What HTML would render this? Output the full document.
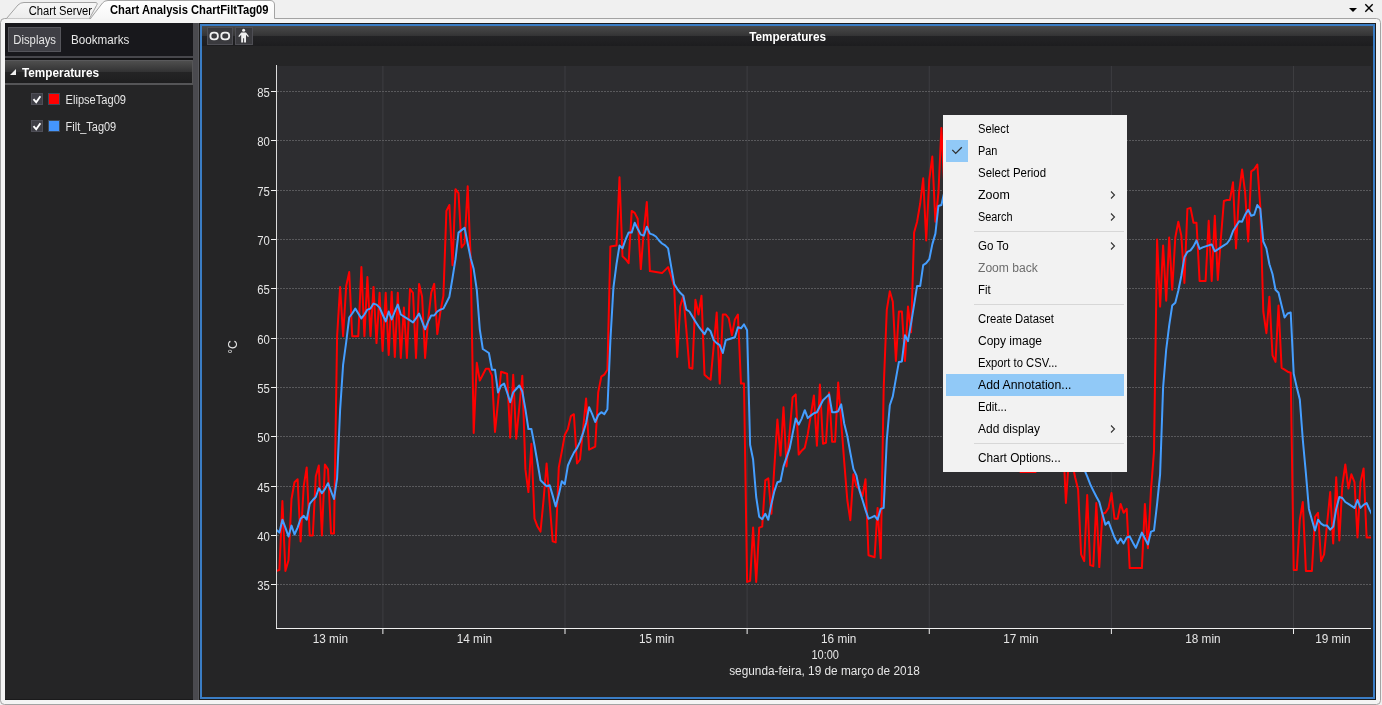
<!DOCTYPE html>
<html lang="pt"><head><meta charset="utf-8"><title>Chart Analysis ChartFiltTag09</title>
<style>html,body{margin:0;padding:0;background:#f0f0f0;overflow:hidden}body{width:1382px;height:705px;position:relative;font-family:"Liberation Sans", sans-serif}svg{position:absolute;left:0;top:0;display:block;will-change:transform}text{font-family:"Liberation Sans", sans-serif;font-size:12px}.b{font-weight:bold}.w{fill:#e6e6e6}.m{fill:#000}</style></head><body>
<svg width="1382" height="705" viewBox="0 0 1382 705">
<defs>
<linearGradient id="gh" x1="0" y1="0" x2="0" y2="1"><stop offset="0" stop-color="#515151"/><stop offset="0.48" stop-color="#333334"/><stop offset="0.5" stop-color="#242425"/><stop offset="1" stop-color="#1d1d1e"/></linearGradient>
<linearGradient id="gt" x1="0" y1="0" x2="0" y2="1"><stop offset="0" stop-color="#4a4a4a"/><stop offset="0.48" stop-color="#343435"/><stop offset="0.5" stop-color="#232325"/><stop offset="1" stop-color="#1d1d1f"/></linearGradient>
<linearGradient id="gtab" x1="0" y1="0" x2="0" y2="1"><stop offset="0" stop-color="#f7f7f7"/><stop offset="1" stop-color="#ececec"/></linearGradient>
<linearGradient id="gtab2" x1="0" y1="0" x2="0" y2="1"><stop offset="0" stop-color="#ffffff"/><stop offset="1" stop-color="#f6f6f6"/></linearGradient>
<clipPath id="cp"><rect x="277" y="66" width="1094" height="562"/></clipPath>
</defs>
<rect width="1382" height="705" fill="#f0f0f0"/>
<rect x="0.5" y="18.5" width="1380" height="686" rx="4" ry="4" fill="#f4f4f4" stroke="#a3a3a3"/>
<path d="M6.5,18.5 L18,5 Q20.5,2.5 24,2.5 L95,2.5 Q98.5,2.5 96.5,5.5 L89.5,18.5" fill="url(#gtab)" stroke="#a3a3a3"/>
<path d="M90.5,19.5 L102.5,3 Q104.5,0.5 108,0.5 L270,0.5 Q274.5,0.5 274.5,5 L274.5,19.5 Z" fill="url(#gtab2)" stroke="none"/>
<path d="M90.5,18.5 L102.5,3 Q104.5,0.5 108,0.5 L270,0.5 Q274.5,0.5 274.5,5 L274.5,18.5" fill="none" stroke="#a3a3a3"/>
<rect x="91.5" y="18" width="182.5" height="1.5" fill="#f6f6f6"/>
<text class="m" x="28.7" y="15" textLength="63.3" lengthAdjust="spacingAndGlyphs">Chart Server</text>
<text class="m b" x="110" y="13.5" textLength="158.5" lengthAdjust="spacingAndGlyphs">Chart Analysis ChartFiltTag09</text>
<path d="M1349,8 L1357,8 L1353,12 Z" fill="#000"/>
<path d="M1365.3,4.3 L1372.7,11.7 M1372.7,4.3 L1365.3,11.7" stroke="#000" stroke-width="1.4" fill="none"/>
<g shape-rendering="crispEdges">
<rect x="5" y="23" width="1371" height="677" fill="#252526"/>
<rect x="5" y="699" width="1371" height="1" fill="#1a1a1b"/>
<rect x="5" y="23" width="188" height="33" fill="#18181c"/>
<rect x="5" y="56" width="188" height="2" fill="#47474c"/>
<rect x="5" y="58" width="188" height="2" fill="#121214"/>
<rect x="8.5" y="27.5" width="52" height="24" fill="#3f3f45" stroke="#55555b"/>
<rect x="5" y="60" width="188" height="24" fill="url(#gh)"/>
<rect x="5" y="60" width="188" height="1" fill="#5a5a5c"/>
<rect x="5" y="83" width="188" height="1.5" fill="#555557"/>
<rect x="192" y="60" width="1" height="24" fill="#555557"/>
<rect x="193" y="23" width="6" height="677" fill="#4a4a4f"/>
<rect x="198" y="23" width="1" height="677" fill="#58585c"/>
<rect x="199" y="23" width="1177" height="677" fill="#1c1c1d"/>
<rect x="200" y="24" width="1175" height="674.5" fill="#3a7dc5"/>
<rect x="202" y="26" width="1171" height="670.7" fill="#252526"/>
<rect x="202" y="26" width="1171" height="20" fill="url(#gt)"/>
<rect x="207.5" y="27.5" width="25" height="17" fill="#3a3a3e" stroke="#4e4e54"/>
<rect x="235.5" y="27.5" width="17" height="17" fill="#3a3a3e" stroke="#4e4e54"/>
<rect x="277" y="66" width="1094" height="562" fill="#2d2d30"/>
</g>
<rect x="382.375" y="66" width="1" height="562" fill="#3d3d40"/>
<rect x="564.500" y="66" width="1" height="562" fill="#3d3d40"/>
<rect x="746.625" y="66" width="1" height="562" fill="#3d3d40"/>
<rect x="928.750" y="66" width="1" height="562" fill="#3d3d40"/>
<rect x="1110.875" y="66" width="1" height="562" fill="#3d3d40"/>
<rect x="1293.000" y="66" width="1" height="562" fill="#3d3d40"/>
<line x1="277" y1="584.5" x2="1371" y2="584.5" stroke="#59595c" stroke-width="1" stroke-dasharray="2 1" shape-rendering="crispEdges"/>
<line x1="277" y1="535.5" x2="1371" y2="535.5" stroke="#59595c" stroke-width="1" stroke-dasharray="2 1" shape-rendering="crispEdges"/>
<line x1="277" y1="486.5" x2="1371" y2="486.5" stroke="#59595c" stroke-width="1" stroke-dasharray="2 1" shape-rendering="crispEdges"/>
<line x1="277" y1="436.5" x2="1371" y2="436.5" stroke="#59595c" stroke-width="1" stroke-dasharray="2 1" shape-rendering="crispEdges"/>
<line x1="277" y1="387.5" x2="1371" y2="387.5" stroke="#59595c" stroke-width="1" stroke-dasharray="2 1" shape-rendering="crispEdges"/>
<line x1="277" y1="338.5" x2="1371" y2="338.5" stroke="#59595c" stroke-width="1" stroke-dasharray="2 1" shape-rendering="crispEdges"/>
<line x1="277" y1="288.5" x2="1371" y2="288.5" stroke="#59595c" stroke-width="1" stroke-dasharray="2 1" shape-rendering="crispEdges"/>
<line x1="277" y1="239.5" x2="1371" y2="239.5" stroke="#59595c" stroke-width="1" stroke-dasharray="2 1" shape-rendering="crispEdges"/>
<line x1="277" y1="190.5" x2="1371" y2="190.5" stroke="#59595c" stroke-width="1" stroke-dasharray="2 1" shape-rendering="crispEdges"/>
<line x1="277" y1="140.5" x2="1371" y2="140.5" stroke="#59595c" stroke-width="1" stroke-dasharray="2 1" shape-rendering="crispEdges"/>
<line x1="277" y1="91.5" x2="1371" y2="91.5" stroke="#59595c" stroke-width="1" stroke-dasharray="2 1" shape-rendering="crispEdges"/>
<g clip-path="url(#cp)" fill="none" stroke-linejoin="round" stroke-width="2"><polyline stroke="#ff0000" points="276.3,571.0 279.4,570.0 282.4,501.0 285.4,571.0 288.5,560.2 291.5,499.0 294.5,482.2 297.6,479.3 300.6,541.4 303.7,486.2 306.7,467.4 309.7,535.5 312.8,535.5 315.8,476.3 318.8,465.5 321.9,535.5 324.9,464.5 328.0,469.4 331.0,533.5 334.0,533.5 337.1,336.2 340.1,286.9 343.1,336.2 346.2,285.9 349.2,272.1 352.2,336.2 355.3,336.2 358.3,336.2 361.4,267.1 364.4,336.2 367.4,277.0 370.5,336.2 373.5,286.9 376.5,343.1 379.6,292.8 382.6,351.0 385.7,292.8 388.7,354.9 391.7,291.8 394.8,356.9 397.8,292.8 400.8,357.9 403.9,307.6 406.9,357.9 410.0,288.8 413.0,292.8 416.0,357.9 419.1,283.9 422.1,296.7 425.1,357.9 428.2,319.4 431.2,292.8 434.2,283.9 437.3,334.2 440.3,312.5 443.4,295.7 446.4,210.9 449.4,205.0 452.5,265.2 455.5,189.2 458.5,193.1 461.6,247.4 464.6,243.5 467.7,186.2 470.7,259.2 473.7,432.9 476.8,362.8 479.8,380.6 482.8,374.7 485.9,368.8 488.9,368.8 492.0,375.7 495.0,431.9 498.0,402.3 501.1,371.7 504.1,372.7 507.1,373.7 510.2,437.8 513.2,374.7 516.2,438.8 519.3,407.2 522.3,375.7 525.4,469.4 528.4,492.1 531.4,443.8 534.5,518.7 537.5,526.6 540.5,531.6 543.6,499.5 546.6,463.5 549.7,503.9 552.7,541.4 555.7,542.4 558.8,467.4 561.8,451.6 564.8,434.9 567.9,429.0 570.9,416.1 573.9,414.2 577.0,463.5 580.0,459.5 583.1,429.0 586.1,398.4 589.1,449.7 592.2,448.2 595.2,446.7 598.2,392.4 601.3,376.7 604.3,374.7 607.4,369.7 610.4,246.4 613.4,245.9 616.5,245.4 619.5,177.3 622.5,256.3 625.6,259.2 628.6,263.2 631.7,210.9 634.7,212.9 637.7,218.8 640.8,269.1 643.8,230.6 646.8,202.0 649.9,271.1 652.9,271.6 655.9,272.1 659.0,272.6 662.0,273.1 665.1,270.1 668.1,267.1 671.1,276.0 674.2,286.9 677.2,356.9 680.2,306.6 683.3,295.7 686.3,329.3 689.4,367.8 692.4,368.8 695.4,299.7 698.5,314.5 701.5,295.7 704.5,374.7 707.6,377.6 710.6,379.6 713.7,346.1 716.7,312.5 719.7,383.6 722.8,314.5 725.8,314.5 728.8,318.4 731.9,335.2 734.9,319.4 737.9,314.5 741.0,383.6 744.0,383.6 747.1,581.9 750.1,580.9 753.1,527.6 756.2,581.9 759.2,527.6 762.2,526.6 765.3,480.3 768.3,478.3 771.4,513.8 774.4,466.4 777.4,419.6 780.5,455.6 783.5,407.2 786.5,466.4 789.6,432.9 792.6,397.4 795.7,394.4 798.7,454.6 801.7,450.7 804.8,447.7 807.8,433.9 810.8,415.1 813.9,395.4 816.9,445.7 819.9,384.5 823.0,443.8 826.0,442.8 829.1,392.4 832.1,441.8 835.1,441.8 838.2,382.6 841.2,422.0 844.2,461.5 847.3,500.0 850.3,520.2 853.4,474.3 856.4,486.2 859.4,489.1 862.5,496.0 865.5,479.3 868.5,555.2 871.6,556.2 874.6,557.2 877.6,507.9 880.7,558.2 883.7,387.5 886.8,309.6 889.8,291.3 892.8,301.7 895.9,360.9 898.9,311.5 901.9,311.5 905.0,360.9 908.0,306.6 911.1,332.3 914.1,232.6 917.1,221.7 920.2,203.5 923.2,178.3 926.2,240.5 929.3,179.3 932.3,156.6 935.4,221.7 938.4,193.1 941.4,128.0 944.5,190.2 947.5,150.7 950.5,200.0 953.6,160.6 956.6,209.9 959.6,170.4 962.7,219.8 965.7,190.2 968.8,239.5 971.8,200.0 974.8,249.4 977.9,219.8 980.9,279.0 983.9,239.5 987.0,298.7 990.0,269.1 993.1,318.4 996.1,288.8 999.1,338.2 1002.2,318.4 1005.2,377.6 1008.2,357.9 1011.3,417.1 1014.3,397.4 1017.4,446.7 1020.4,471.9 1023.4,471.9 1026.5,471.9 1029.5,471.9 1032.5,471.9 1035.6,471.9 1038.6,417.1 1041.6,466.4 1044.7,407.2 1047.7,456.6 1050.8,417.1 1053.8,461.5 1056.8,427.0 1059.9,456.6 1062.9,436.8 1065.9,503.0 1069.0,456.6 1072.0,461.5 1075.1,477.3 1078.1,489.6 1081.1,554.3 1084.2,561.2 1087.2,495.1 1090.2,565.1 1093.3,566.1 1096.3,503.0 1099.3,567.1 1102.4,513.8 1105.4,512.8 1108.5,507.9 1111.5,493.1 1114.5,518.7 1117.6,518.7 1120.6,503.9 1123.6,512.8 1126.7,508.9 1129.7,568.1 1132.8,568.1 1135.8,568.1 1138.8,568.1 1141.9,568.1 1144.9,503.9 1147.9,548.3 1151.0,489.6 1154.0,451.6 1157.1,239.5 1160.1,306.6 1163.1,245.4 1166.2,300.7 1169.2,237.5 1172.2,289.8 1175.3,237.5 1178.3,221.7 1181.3,235.6 1184.4,282.9 1187.4,208.9 1190.5,207.9 1193.5,222.7 1196.5,222.7 1199.6,280.9 1202.6,280.9 1205.6,280.9 1208.7,220.8 1211.7,280.9 1214.8,215.8 1217.8,280.0 1220.8,239.5 1223.9,201.0 1226.9,200.0 1229.9,200.0 1233.0,182.3 1236.0,248.4 1239.1,192.1 1242.1,169.4 1245.1,192.1 1248.2,241.5 1251.2,171.4 1254.2,169.4 1257.3,164.5 1260.3,206.9 1263.3,311.5 1266.4,333.2 1269.4,296.7 1272.5,355.4 1275.5,361.9 1278.5,305.6 1281.6,367.8 1284.6,369.7 1287.6,371.7 1290.7,372.7 1293.7,570.0 1296.8,570.0 1299.8,519.7 1302.8,502.0 1305.9,571.0 1308.9,571.0 1311.9,571.0 1315.0,516.8 1318.0,512.8 1321.1,561.2 1324.1,554.3 1327.1,523.7 1330.2,492.1 1333.2,543.4 1336.2,477.3 1339.3,540.4 1342.3,485.7 1345.3,464.5 1348.4,488.6 1351.4,474.3 1354.5,482.2 1357.5,537.5 1360.5,482.2 1363.6,468.4 1366.6,537.5 1369.6,537.5 1372.7,537.5"/><polyline stroke="#459eff" points="276.3,529.6 279.4,532.6 282.4,519.7 285.4,527.6 288.5,536.5 291.5,525.6 294.5,534.5 297.6,527.6 300.6,518.7 303.7,515.8 306.7,519.7 309.7,503.9 312.8,500.0 315.8,497.0 318.8,488.2 321.9,493.1 324.9,489.1 328.0,483.2 331.0,491.1 334.0,499.0 337.1,478.3 340.1,410.2 343.1,364.8 346.2,342.1 349.2,317.5 352.2,313.5 355.3,308.6 358.3,313.5 361.4,318.4 364.4,314.5 367.4,309.6 370.5,308.6 373.5,303.6 376.5,304.6 379.6,307.6 382.6,314.5 385.7,321.4 388.7,311.5 391.7,319.4 394.8,311.5 397.8,304.6 400.8,314.5 403.9,316.5 406.9,318.4 410.0,320.4 413.0,322.4 416.0,318.4 419.1,313.5 422.1,321.4 425.1,329.3 428.2,321.4 431.2,315.5 434.2,315.5 437.3,311.5 440.3,309.6 443.4,308.6 446.4,302.7 449.4,296.7 452.5,278.0 455.5,259.2 458.5,232.6 461.6,230.1 464.6,227.7 467.7,243.5 470.7,258.3 473.7,269.1 476.8,289.8 479.8,329.3 482.8,349.0 485.9,351.0 488.9,353.0 492.0,369.7 495.0,369.7 498.0,392.4 501.1,385.5 504.1,383.6 507.1,392.4 510.2,402.3 513.2,392.4 516.2,389.0 519.3,385.5 522.3,391.5 525.4,409.2 528.4,429.0 531.4,429.0 534.5,445.2 537.5,462.5 540.5,480.3 543.6,483.2 546.6,486.2 549.7,485.2 552.7,495.6 555.7,506.4 558.8,494.6 561.8,481.2 564.8,484.2 567.9,465.5 570.9,458.6 573.9,452.6 577.0,448.2 580.0,441.8 583.1,432.9 586.1,423.0 589.1,407.2 592.2,414.2 595.2,422.0 598.2,415.1 601.3,412.2 604.3,414.2 607.4,409.2 610.4,340.1 613.4,287.9 616.5,264.2 619.5,245.4 622.5,248.4 625.6,239.5 628.6,232.6 631.7,232.6 634.7,222.7 637.7,228.7 640.8,234.6 643.8,235.6 646.8,226.7 649.9,233.6 652.9,234.6 655.9,236.5 659.0,240.5 662.0,243.5 665.1,245.4 668.1,248.4 671.1,266.1 674.2,283.9 677.2,288.8 680.2,292.8 683.3,295.7 686.3,309.6 689.4,311.5 692.4,316.5 695.4,321.4 698.5,326.3 701.5,330.3 704.5,334.2 707.6,328.3 710.6,331.3 713.7,340.1 716.7,343.1 719.7,345.1 722.8,353.0 725.8,340.1 728.8,339.2 731.9,338.2 734.9,337.2 737.9,327.3 741.0,328.3 744.0,324.4 747.1,330.3 750.1,444.7 753.1,459.5 756.2,497.0 759.2,516.8 762.2,519.2 765.3,513.8 768.3,519.7 771.4,503.9 774.4,491.1 777.4,482.2 780.5,481.2 783.5,466.4 786.5,457.6 789.6,448.7 792.6,433.9 795.7,418.6 798.7,424.5 801.7,418.6 804.8,410.2 807.8,418.1 810.8,415.6 813.9,413.2 816.9,412.2 819.9,406.3 823.0,400.3 826.0,397.4 829.1,394.4 832.1,412.2 835.1,412.2 838.2,411.2 841.2,404.3 844.2,423.5 847.3,435.9 850.3,452.6 853.4,468.9 856.4,475.3 859.4,490.1 862.5,500.0 865.5,509.9 868.5,518.7 871.6,517.3 874.6,515.8 877.6,519.7 880.7,508.9 883.7,507.9 886.8,439.8 889.8,405.3 892.8,396.4 895.9,378.6 898.9,361.9 901.9,361.4 905.0,335.2 908.0,341.1 911.1,323.4 914.1,304.6 917.1,285.9 920.2,285.9 923.2,265.2 926.2,263.2 929.3,259.2 932.3,244.4 935.4,233.6 938.4,206.0 941.4,205.0 944.5,191.2 947.5,184.2 950.5,183.3 953.6,180.3 956.6,184.2 959.6,182.3 962.7,187.2 965.7,188.2 968.8,195.1 971.8,196.1 974.8,204.0 977.9,206.9 980.9,217.8 983.9,221.7 987.0,233.6 990.0,239.5 993.1,251.3 996.1,257.3 999.1,269.1 1002.2,277.0 1005.2,292.8 1008.2,302.7 1011.3,320.4 1014.3,332.3 1017.4,350.0 1020.4,368.8 1023.4,384.5 1026.5,397.4 1029.5,409.2 1032.5,418.1 1035.6,427.0 1038.6,425.0 1041.6,430.9 1044.7,428.0 1047.7,431.9 1050.8,429.9 1053.8,434.9 1056.8,433.9 1059.9,436.8 1062.9,436.8 1065.9,446.7 1069.0,448.7 1072.0,448.7 1075.1,449.7 1078.1,455.6 1081.1,464.5 1084.2,469.4 1087.2,476.3 1090.2,484.2 1093.3,490.6 1096.3,496.5 1099.3,502.0 1102.4,513.8 1105.4,524.7 1108.5,521.7 1111.5,529.6 1114.5,537.5 1117.6,543.4 1120.6,538.5 1123.6,543.4 1126.7,537.5 1129.7,536.5 1132.8,542.4 1135.8,547.8 1138.8,540.4 1141.9,532.6 1144.9,538.5 1147.9,544.4 1151.0,531.6 1154.0,530.6 1157.1,503.9 1160.1,474.3 1163.1,387.5 1166.2,349.5 1169.2,325.3 1172.2,305.6 1175.3,302.7 1178.3,290.8 1181.3,276.0 1184.4,257.3 1187.4,251.8 1190.5,250.4 1193.5,246.4 1196.5,240.5 1199.6,248.9 1202.6,247.4 1205.6,246.4 1208.7,245.4 1211.7,244.4 1214.8,251.3 1217.8,249.4 1220.8,247.4 1223.9,245.4 1226.9,243.5 1229.9,239.5 1233.0,231.1 1236.0,226.2 1239.1,221.3 1242.1,221.7 1245.1,214.8 1248.2,209.9 1251.2,215.8 1254.2,214.8 1257.3,205.0 1260.3,208.9 1263.3,241.5 1266.4,248.4 1269.4,264.2 1272.5,274.0 1275.5,289.8 1278.5,292.8 1281.6,305.6 1284.6,317.5 1287.6,313.5 1290.7,312.5 1293.7,373.7 1296.8,387.5 1299.8,399.4 1302.8,439.8 1305.9,473.4 1308.9,508.9 1311.9,519.7 1315.0,530.6 1318.0,519.7 1321.1,523.7 1324.1,525.6 1327.1,525.6 1330.2,529.6 1333.2,526.6 1336.2,508.9 1339.3,497.0 1342.3,498.0 1345.3,502.0 1348.4,503.9 1351.4,505.9 1354.5,507.9 1357.5,500.0 1360.5,507.9 1363.6,504.9 1366.6,503.0 1369.6,509.9 1372.7,515.8"/></g>
<g shape-rendering="crispEdges" fill="#f0f0f0">
<rect x="276" y="65" width="1" height="564" fill="#dcdcdc"/>
<rect x="276" y="628" width="1095" height="1"/>
<rect x="382.375" y="628" width="1" height="6" shape-rendering="auto"/>
<rect x="564.500" y="628" width="1" height="6" shape-rendering="auto"/>
<rect x="746.625" y="628" width="1" height="6" shape-rendering="auto"/>
<rect x="928.750" y="628" width="1" height="6" shape-rendering="auto"/>
<rect x="1110.875" y="628" width="1" height="6" shape-rendering="auto"/>
<rect x="1293.000" y="628" width="1" height="6" shape-rendering="auto"/>
<rect x="271" y="584" width="5" height="1"/>
<rect x="271" y="535" width="5" height="1"/>
<rect x="271" y="486" width="5" height="1"/>
<rect x="271" y="436" width="5" height="1"/>
<rect x="271" y="387" width="5" height="1"/>
<rect x="271" y="338" width="5" height="1"/>
<rect x="271" y="288" width="5" height="1"/>
<rect x="271" y="239" width="5" height="1"/>
<rect x="271" y="190" width="5" height="1"/>
<rect x="271" y="140" width="5" height="1"/>
<rect x="271" y="91" width="5" height="1"/>
</g>
<text class="w" x="269.8" y="590.2" text-anchor="end" textLength="12.6" lengthAdjust="spacingAndGlyphs">35</text>
<text class="w" x="269.8" y="540.9" text-anchor="end" textLength="12.6" lengthAdjust="spacingAndGlyphs">40</text>
<text class="w" x="269.8" y="491.6" text-anchor="end" textLength="12.6" lengthAdjust="spacingAndGlyphs">45</text>
<text class="w" x="269.8" y="442.2" text-anchor="end" textLength="12.6" lengthAdjust="spacingAndGlyphs">50</text>
<text class="w" x="269.8" y="392.9" text-anchor="end" textLength="12.6" lengthAdjust="spacingAndGlyphs">55</text>
<text class="w" x="269.8" y="343.6" text-anchor="end" textLength="12.6" lengthAdjust="spacingAndGlyphs">60</text>
<text class="w" x="269.8" y="294.2" text-anchor="end" textLength="12.6" lengthAdjust="spacingAndGlyphs">65</text>
<text class="w" x="269.8" y="244.9" text-anchor="end" textLength="12.6" lengthAdjust="spacingAndGlyphs">70</text>
<text class="w" x="269.8" y="195.6" text-anchor="end" textLength="12.6" lengthAdjust="spacingAndGlyphs">75</text>
<text class="w" x="269.8" y="146.2" text-anchor="end" textLength="12.6" lengthAdjust="spacingAndGlyphs">80</text>
<text class="w" x="269.8" y="96.9" text-anchor="end" textLength="12.6" lengthAdjust="spacingAndGlyphs">85</text>
<text class="w" transform="translate(236.6,347) rotate(-90)" text-anchor="middle">°C</text>
<text class="w" x="330.4" y="642.8" text-anchor="middle" textLength="35.3" lengthAdjust="spacingAndGlyphs">13 min</text>
<text class="w" x="474.4" y="642.8" text-anchor="middle" textLength="35.3" lengthAdjust="spacingAndGlyphs">14 min</text>
<text class="w" x="656.6" y="642.8" text-anchor="middle" textLength="35.3" lengthAdjust="spacingAndGlyphs">15 min</text>
<text class="w" x="838.7" y="642.8" text-anchor="middle" textLength="35.3" lengthAdjust="spacingAndGlyphs">16 min</text>
<text class="w" x="1020.8" y="642.8" text-anchor="middle" textLength="35.3" lengthAdjust="spacingAndGlyphs">17 min</text>
<text class="w" x="1202.9" y="642.8" text-anchor="middle" textLength="35.3" lengthAdjust="spacingAndGlyphs">18 min</text>
<text class="w" x="1332.8" y="642.8" text-anchor="middle" textLength="35.3" lengthAdjust="spacingAndGlyphs">19 min</text>
<text class="w" x="825.2" y="658.6" text-anchor="middle" textLength="27.5" lengthAdjust="spacingAndGlyphs">10:00</text>
<text class="w" x="824.5" y="674.8" text-anchor="middle" textLength="190.6" lengthAdjust="spacingAndGlyphs">segunda-feira, 19 de março de 2018</text>
<text class="b" fill="#ffffff" x="787.6" y="41" text-anchor="middle" textLength="76.8" lengthAdjust="spacingAndGlyphs">Temperatures</text>
<text class="w" x="13.3" y="44" textLength="42.7" lengthAdjust="spacingAndGlyphs">Displays</text>
<text class="w" x="71" y="44" textLength="58.3" lengthAdjust="spacingAndGlyphs">Bookmarks</text>
<path d="M16,69 L16,75 L10,75 Z" fill="#f0f0f0"/>
<text class="b" fill="#ffffff" x="22" y="77.4" textLength="77" lengthAdjust="spacingAndGlyphs">Temperatures</text>
<rect x="31.5" y="93.5" width="11" height="11" fill="#3f3f46" stroke="#4e4e56" shape-rendering="crispEdges"/>
<path d="M33.5,99.2 L36.2,102.3 L40.4,96.2" fill="none" stroke="#ffffff" stroke-width="1.9"/>
<rect x="48.5" y="93.5" width="11" height="11" fill="#ff0000" stroke="#3d4a5a" shape-rendering="crispEdges"/>
<text class="w" x="65.6" y="103.9" textLength="60.4" lengthAdjust="spacingAndGlyphs">ElipseTag09</text>
<rect x="31.5" y="120.5" width="11" height="11" fill="#3f3f46" stroke="#4e4e56" shape-rendering="crispEdges"/>
<path d="M33.5,126.2 L36.2,129.3 L40.4,123.2" fill="none" stroke="#ffffff" stroke-width="1.9"/>
<rect x="48.5" y="120.5" width="11" height="11" fill="#4496ff" stroke="#3d4a5a" shape-rendering="crispEdges"/>
<text class="w" x="65.6" y="130.9" textLength="50.6" lengthAdjust="spacingAndGlyphs">Filt_Tag09</text>
<g fill="none" stroke="#f0f0f0" stroke-width="1.8"><rect x="210.4" y="32.7" width="7.5" height="6.7" rx="3.2" ry="3.2"/><rect x="221.3" y="32.7" width="7.9" height="6.7" rx="3.2" ry="3.2"/></g>
<g fill="#f0f0f0" transform="translate(-0.4,0)"><circle cx="244" cy="30.3" r="1.5"/><path d="M241.6,32.4 L246.4,32.4 L249.3,36.2 L248.4,37 L246.4,34.8 L246.4,42.6 L244.5,42.6 L244.5,38.2 L243.5,38.2 L243.5,42.6 L241.6,42.6 L241.6,34.8 L239.6,37 L238.7,36.2 Z"/></g>
<g shape-rendering="crispEdges">
<rect x="943" y="115" width="184" height="357" fill="#f2f2f2"/>
<rect x="946" y="140" width="22" height="22" fill="#91c9f7"/>
<rect x="946" y="374" width="178" height="22" fill="#91c9f7"/>
<rect x="974" y="231" width="150" height="1" fill="#d7d7d7"/>
<rect x="974" y="304" width="150" height="1" fill="#d7d7d7"/>
<rect x="974" y="443" width="150" height="1" fill="#d7d7d7"/>
</g>
<path d="M952.3,149.9 L955.7,153.4 L961.8,147.2" fill="none" stroke="#303030" stroke-width="1.3"/>
<text fill="#000" x="978" y="132.9" textLength="31" lengthAdjust="spacingAndGlyphs">Select</text>
<text fill="#000" x="978" y="154.9" textLength="19.4" lengthAdjust="spacingAndGlyphs">Pan</text>
<text fill="#000" x="978" y="176.9" textLength="68" lengthAdjust="spacingAndGlyphs">Select Period</text>
<text fill="#000" x="978" y="198.9" textLength="31.8" lengthAdjust="spacingAndGlyphs">Zoom</text>
<path d="M1111,191.5 L1114.5,195 L1111,198.5" fill="none" stroke="#333" stroke-width="1.1"/>
<text fill="#000" x="978" y="220.9" textLength="34.5" lengthAdjust="spacingAndGlyphs">Search</text>
<path d="M1111,213.5 L1114.5,217 L1111,220.5" fill="none" stroke="#333" stroke-width="1.1"/>
<text fill="#000" x="978" y="249.9" textLength="30.7" lengthAdjust="spacingAndGlyphs">Go To</text>
<path d="M1111,242.5 L1114.5,246 L1111,249.5" fill="none" stroke="#333" stroke-width="1.1"/>
<text fill="#6d6d6d" x="978" y="271.9" textLength="59.8" lengthAdjust="spacingAndGlyphs">Zoom back</text>
<text fill="#000" x="978" y="293.9" textLength="12.6" lengthAdjust="spacingAndGlyphs">Fit</text>
<text fill="#000" x="978" y="322.9" textLength="76" lengthAdjust="spacingAndGlyphs">Create Dataset</text>
<text fill="#000" x="978" y="344.9" textLength="64" lengthAdjust="spacingAndGlyphs">Copy image</text>
<text fill="#000" x="978" y="366.9" textLength="79.5" lengthAdjust="spacingAndGlyphs">Export to CSV...</text>
<text fill="#000" x="978" y="388.9" textLength="93.5" lengthAdjust="spacingAndGlyphs">Add Annotation...</text>
<text fill="#000" x="978" y="410.9" textLength="28.8" lengthAdjust="spacingAndGlyphs">Edit...</text>
<text fill="#000" x="978" y="432.9" textLength="62" lengthAdjust="spacingAndGlyphs">Add display</text>
<path d="M1111,425.5 L1114.5,429 L1111,432.5" fill="none" stroke="#333" stroke-width="1.1"/>
<text fill="#000" x="978" y="461.9" textLength="82.7" lengthAdjust="spacingAndGlyphs">Chart Options...</text>
</svg></body></html>
